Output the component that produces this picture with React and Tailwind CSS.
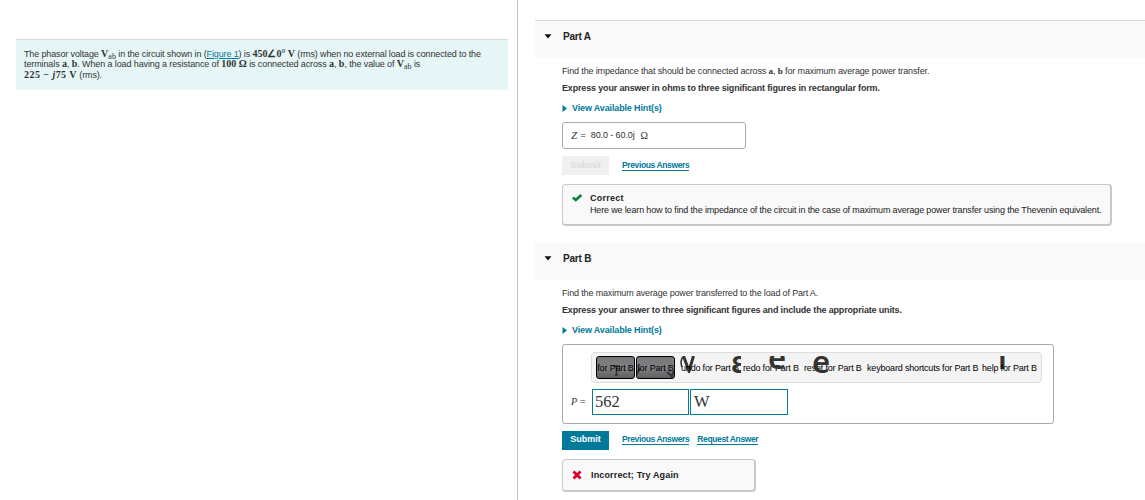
import React from 'react';

const SERIF = "font-['Liberation_Serif',serif]";

// Each glyph sits behind its label and is clipped by its own small box
const TOOLBAR_ITEMS = [
    { label: 'undo for Part B', width: 'w-[57px]' },
    { label: 'redo for Part B', width: 'w-[56px]', glyph: 'ε', box: '-left-[11px] w-[9px] h-[18px]', shift: '-left-px -top-[12px]' },
    { label: 'reset for Part B', width: 'w-[58px]', glyph: 'e', box: '-left-[36px] w-[19px] h-[17px]', shift: 'left-0 -top-[16px]' },
    { label: 'keyboard shortcuts for Part B', width: 'w-[110px]', glyph: 'e', box: '-left-[55px] w-[19px] h-[18px]', shift: 'left-0 -top-[12px]' },
    { label: 'help for Part B', width: 'w-[55px]', glyph: 'l', box: 'left-[16px] w-[8px] h-[13px]', shift: 'left-0 -top-[15px]' },
];

function MathText({ className = '', children }) {
    return <span className={`${SERIF} tracking-normal ${className}`}>{children}</span>;
}

function Sub({ children }) {
    return <span className="relative top-[2px] text-[8px] font-normal">{children}</span>;
}

function PartHeader({ title, className = '' }) {
    return (
        <div className={`flex items-start bg-[#f9f9f9] pl-[9px] ${className}`}>
            <svg className="mt-[13px] h-[5px] w-[8px]" viewBox="0 0 8 5">
                <path d="M0.5 0.3H7.5L4 4.6Z" fill="#111" />
            </svg>
            <h2 className="mt-[10px] ml-[11px] text-[10px] leading-[12px] font-bold tracking-[-0.2px] text-[#222]">{title}</h2>
        </div>
    );
}

function HintLink() {
    return (
        <a href="#hints" className="flex h-[12px] items-center text-[9px] leading-[12px] font-bold tracking-[-0.14px] text-[#007a9b]">
            <svg className="mr-[5px] h-[7px] w-[5px]" viewBox="0 0 5 7">
                <path d="M0.5 0V7L5 3.5Z" fill="currentColor" />
            </svg>
            View Available Hint(s)
        </a>
    );
}

function AnswerLink({ className = '', children }) {
    return (
        <a href="#answers" className={`border-b border-[#007a9b] text-[8.5px] leading-[9px] font-bold tracking-[-0.38px] whitespace-nowrap text-[#007a9b] ${className}`}>
            {children}
        </a>
    );
}

function TemplateButton({ children }) {
    return (
        <button className="relative h-[23px] w-[39px] overflow-hidden rounded-[3px] border border-black bg-linear-to-b from-[#77777a] via-[#808083] to-[#606063] text-[9px] tracking-[-0.16px] whitespace-nowrap text-black">
            {children}
            <span className="absolute inset-x-0 top-[5px] text-center leading-[12px]">for Part B</span>
        </button>
    );
}

export default function App() {
    return (
        <div className="flex h-[500px] w-[1145px] overflow-hidden bg-white font-['Liberation_Sans',sans-serif] text-[9px] text-[#333]">
            {/* Problem statement */}
            <aside className="w-[518px] shrink-0 border-r border-[#c0c6d0] pt-[39px] pl-[16px]">
                <div className="h-[51px] w-[492px] border-t border-[#d5dddd] bg-[#e6f6f6] pt-[9px] pl-[8px] leading-[10.5px] whitespace-nowrap">
                    <p className="h-[10px] tracking-[-0.13px]">
                        The phasor voltage <MathText className="text-[10px] font-bold">V<Sub>ab</Sub></MathText> in the circuit shown in (<a href="#figure" className="text-[#007a9b] underline">Figure 1</a>) is{' '}
                        <MathText className="text-[10px] font-bold">450∠0° V</MathText> (rms) when no external load is connected to the
                    </p>
                    <p className="h-[11px] tracking-[-0.11px]">
                        terminals <MathText className="text-[10px] font-bold">a</MathText>, <MathText className="text-[10px] font-bold">b</MathText>. When a load having a resistance of{' '}
                        <MathText className="text-[10px] font-bold">100 Ω</MathText> is connected across <MathText className="text-[10px] font-bold">a</MathText>,{' '}
                        <MathText className="text-[10px] font-bold">b</MathText>, the value of <MathText className="text-[10px] font-bold">V<Sub>ab</Sub></MathText> is
                    </p>
                    <p className="h-[11px] tracking-[-0.15px]">
                        <span className={`${SERIF} text-[10px] font-bold tracking-[0.45px]`}>225 − <i>j</i>75 V</span> (rms).
                    </p>
                </div>
            </aside>

            <main className="flex-1 pt-[20px] pl-[17px]">
                {/* Part A */}
                <PartHeader title="Part A" className="h-[38px] border-t border-[#ddd]" />
                <section className="flex h-[185px] flex-col items-start pt-[7px] pl-[27px] whitespace-nowrap">
                    <p className="h-[17px] leading-[12px] tracking-[-0.14px]">
                        Find the impedance that should be connected across <MathText className="font-bold">a</MathText>, <MathText className="font-bold">b</MathText> for maximum average power transfer.
                    </p>
                    <p className="h-[20px] leading-[12px] font-bold tracking-[-0.16px]">Express your answer in ohms to three significant figures in rectangular form.</p>
                    <HintLink />
                    <div className="mt-[8px] flex h-[27px] w-[184px] items-center rounded-[3px] border border-[#aaa] pl-[8px] text-[9px]">
                        <MathText className="text-[11px] italic">Z</MathText>
                        <MathText className="ml-[3px] text-[10px]">=</MathText>
                        <span className="ml-[5px] tracking-[-0.1px]">80.0 - 60.0j</span>
                        <MathText className="ml-[6px] text-[10px]">Ω</MathText>
                    </div>
                    <div className="mt-[7px] flex h-[19px] items-center">
                        <button disabled className="h-[19px] w-[47px] bg-[#f0f0f0] text-[9px] font-bold text-[#dcdcdc]">Submit</button>
                        <AnswerLink className="ml-[13px]">Previous Answers</AnswerLink>
                    </div>
                    <div className="mt-[9px] flex h-[42px] w-[550px] rounded-[4px] border border-r-2 border-b-2 border-[#c8c8c8] bg-[#f9f9f9] pt-[7px] pl-[9px]">
                        <svg className="mt-[2px] h-[8px] w-[10px] shrink-0" viewBox="0 0 10 8">
                            <path d="M0.9 3.4L3.8 6L9.3 1" fill="none" stroke="#07843d" strokeWidth="2.7" />
                        </svg>
                        <div className="ml-[8px] leading-[12px] text-[#222]">
                            <h3 className="text-[9px] font-bold tracking-[0.25px]">Correct</h3>
                            <p className="tracking-[-0.155px]">Here we learn how to find the impedance of the circuit in the case of maximum average power transfer using the Thevenin equivalent.</p>
                        </div>
                    </div>
                </section>

                {/* Part B */}
                <PartHeader title="Part B" className="h-[37px]" />
                <section className="flex flex-col items-start pt-[7px] pl-[27px] whitespace-nowrap">
                    <p className="h-[17px] leading-[12px] tracking-[-0.155px]">Find the maximum average power transferred to the load of Part A.</p>
                    <p className="h-[20px] leading-[12px] font-bold tracking-[-0.16px]">Express your answer to three significant figures and include the appropriate units.</p>
                    <HintLink />
                    <div className="mt-[8px] h-[80px] w-[492px] rounded-[3px] border border-[#aaa] pt-[7px]">
                        <div className="ml-[28px] flex h-[31px] w-[451px] items-start rounded-[4px] border border-[#ddd] bg-[#f4f4f4] pt-[3px] pl-[4px] text-black">
                            <TemplateButton>
                                <svg className="absolute top-[8px] left-[15px] h-[12px] w-[9px]" viewBox="0 0 9 12">
                                    <path d="M1 1H8M4.5 1V10M3 10H6" fill="none" stroke="#333" strokeWidth="1.4" />
                                </svg>
                            </TemplateButton>
                            <div className="w-px" />
                            <TemplateButton>
                                <svg className="absolute top-[8px] left-0 h-[14px] w-[38px]" viewBox="0 0 38 14">
                                    <path d="M0 9L3 3M30 7L36 12M37 6L34 13" fill="none" stroke="#333" strokeWidth="2" />
                                </svg>
                            </TemplateButton>
                            <div className="ml-[6px] flex gap-[5px]">
                                {TOOLBAR_ITEMS.map((item) => (
                                    <button key={item.label} className={`relative h-[23px] ${item.width}`}>
                                        {item.glyph ? (
                                            <span aria-hidden="true" className={`absolute top-0 overflow-hidden ${item.box}`}>
                                                <span className={`absolute font-['Noto_Sans','Open_Sans',sans-serif] text-[31px] leading-[34px] font-semibold text-[#333] ${item.shift}`}>{item.glyph}</span>
                                            </span>
                                        ) : (
                                            <svg className="absolute top-0 -left-px h-[17px] w-[15px]" viewBox="0 0 15 17" fill="none" stroke="#333">
                                                <path d="M2.5 1Q0 6 2 11" strokeWidth="1.6" />
                                                <path d="M3.5 0L9 15L13.5 0" strokeWidth="3" />
                                            </svg>
                                        )}
                                        <span className="relative block text-left leading-[24px] tracking-[-0.18px]">{item.label}</span>
                                    </button>
                                ))}
                            </div>
                        </div>
                        <div className="mt-[6px] flex items-center pl-[8px]">
                            <span className={`${SERIF} w-[21px] pb-px text-[10px] tracking-[0.2px]`}><i>P</i> =</span>
                            <input readOnly value="562" aria-label="Value" className={`h-[26px] w-[97px] border border-[#007a9b] px-[2px] text-[16.5px] ${SERIF}`} />
                            <input readOnly value="W" aria-label="Units" className={`ml-px h-[26px] w-[98px] border border-[#007a9b] px-[3px] text-[16.5px] ${SERIF}`} />
                        </div>
                    </div>
                    <div className="mt-[7px] flex h-[19px] items-center">
                        <button className="h-[19px] w-[47px] bg-[#007a9b] pb-px text-[9px] font-bold text-white">Submit</button>
                        <AnswerLink className="mb-[2px] ml-[13px]">Previous Answers</AnswerLink>
                        <AnswerLink className="mb-[2px] ml-[8px]">Request Answer</AnswerLink>
                    </div>
                    <div className="mt-[9px] flex h-[33px] w-[194px] items-center rounded-[4px] border border-r-2 border-b-2 border-[#c8c8c8] bg-[#f9f9f9] pl-[9px]">
                        <svg className="h-[10px] w-[10px]" viewBox="0 0 10 10">
                            <path d="M1.5 1.5L8.5 8.5M8.5 1.5L1.5 8.5" stroke="#d9002b" strokeWidth="2.8" />
                        </svg>
                        <h3 className="mt-px ml-[9px] text-[9px] font-bold tracking-[0.15px] text-[#222]">Incorrect; Try Again</h3>
                    </div>
                </section>
            </main>
        </div>
    );
}
